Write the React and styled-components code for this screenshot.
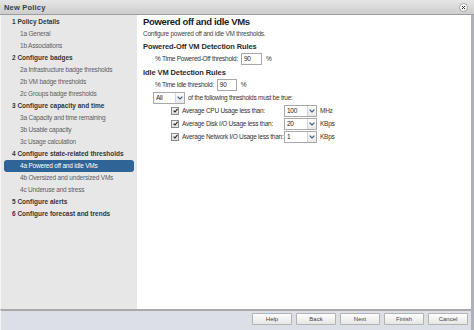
import React from 'react';
import styled, { createGlobalStyle } from 'styled-components';

const GlobalStyle = createGlobalStyle`
  html, body {
    margin: 0;
    padding: 0;
  }
  body {
    font-family: 'Liberation Sans', Arial, sans-serif;
    background: #fff;
  }
`;

const steps = [
  { label: '1 Policy Details', level: 0 },
  { label: '1a General', level: 1 },
  { label: '1b Associations', level: 1 },
  { label: '2 Configure badges', level: 0 },
  { label: '2a Infrastructure badge thresholds', level: 1 },
  { label: '2b VM badge thresholds', level: 1 },
  { label: '2c Groups badge thresholds', level: 1 },
  { label: '3 Configure capacity and time', level: 0 },
  { label: '3a Capacity and time remaining', level: 1 },
  { label: '3b Usable capacity', level: 1 },
  { label: '3c Usage calculation', level: 1 },
  { label: '4 Configure state-related thresholds', level: 0 },
  { label: '4a Powered off and idle VMs', level: 1, active: true },
  { label: '4b Oversized and undersized VMs', level: 1 },
  { label: '4c Underuse and stress', level: 1 },
  { label: '5 Configure alerts', level: 0 },
  { label: '6 Configure forecast and trends', level: 0 },
];

const rules = [
  { label: 'Average CPU Usage less than:', value: '100', unit: 'MHz' },
  { label: 'Average Disk I/O Usage less than:', value: '20', unit: 'KBps' },
  { label: 'Average Network I/O Usage less than:', value: '1', unit: 'KBps' },
];

const buttons = ['Help', 'Back', 'Next', 'Finish', 'Cancel'];

const ChevronDown = () => (
  <svg width="6" height="4" viewBox="0 0 6 4">
    <path d="M0.6 0.6 L3 3 L5.4 0.6" fill="none" stroke="#3d5f86" strokeWidth="1.2" />
  </svg>
);

const CloseIcon = () => (
  <svg width="9" height="9" viewBox="0 0 9 9">
    <circle cx="4.5" cy="4.5" r="4" fill="#f4f4f4" stroke="#9a9a9a" strokeWidth="0.8" />
    <path d="M3 3 L6 6 M6 3 L3 6" stroke="#333" strokeWidth="1" />
  </svg>
);

const CheckMark = () => (
  <svg width="5" height="5" viewBox="0 0 5 5">
    <path d="M0.6 2.6 L2 4 L4.5 0.8" fill="none" stroke="#222" strokeWidth="1.1" />
  </svg>
);

const App = () => {
  return (
    <>
      <GlobalStyle />
      <Window>
        <TitleBar>
          <span>New Policy</span>
          <CloseIcon />
        </TitleBar>
        <Main>
          <Body>
            <Sidebar>
              {steps.map(step => (
                <Step key={step.label} level={step.level} active={step.active}>
                  {step.label}
                </Step>
              ))}
            </Sidebar>
            <Content>
              <Heading>Powered off and idle VMs</Heading>
              <Subtitle>Configure powered off and idle VM thresholds.</Subtitle>
              <SectionTitle>Powered-Off VM Detection Rules</SectionTitle>
              <FieldRow indent={12}>
                <span>% Time Powered-Off threshold:</span>
                <TextBox width={21}>90</TextBox>
                <span>%</span>
              </FieldRow>
              <SectionTitle>Idle VM Detection Rules</SectionTitle>
              <FieldRow indent={12}>
                <span>% Time Idle threshold:</span>
                <TextBox width={20}>90</TextBox>
                <span>%</span>
              </FieldRow>
              <FieldRow indent={10}>
                <Combo>
                  <ComboValue width={19}>All</ComboValue>
                  <ComboArrow>
                    <ChevronDown />
                  </ComboArrow>
                </Combo>
                <span>of the following thresholds must be true:</span>
              </FieldRow>
              {rules.map(rule => (
                <FieldRow key={rule.label} indent={28}>
                  <CheckBox>
                    <CheckMark />
                  </CheckBox>
                  <RuleLabel>{rule.label}</RuleLabel>
                  <Combo>
                    <ComboValue width={20}>{rule.value}</ComboValue>
                    <ComboArrow>
                      <ChevronDown />
                    </ComboArrow>
                  </Combo>
                  <span>{rule.unit}</span>
                </FieldRow>
              ))}
            </Content>
          </Body>
          <Footer>
            {buttons.map(label => (
              <Button key={label}>{label}</Button>
            ))}
          </Footer>
        </Main>
      </Window>
    </>
  );
};

const Window = styled.div`
  width: 474px;
  height: 330px;
  display: flex;
  flex-direction: column;
  overflow: hidden;
  background: #fff;
`;

const TitleBar = styled.div`
  height: 14px;
  flex: none;
  display: flex;
  align-items: center;
  justify-content: space-between;
  padding: 0 6px 0 4px;
  background: linear-gradient(#e6e6e6, #cdcdcd);
  border-bottom: 1px solid #9d9d9d;
  font-size: 7.5px;
  font-weight: bold;
  letter-spacing: 0.2px;
  color: #34404e;
`;

const Main = styled.div`
  flex: 1;
  display: flex;
  flex-direction: column;
  min-height: 0;
  border-right: 3px solid #aeb2b8;
`;

const Body = styled.div`
  flex: 1;
  display: flex;
  min-height: 0;
`;

const Sidebar = styled.div`
  width: 136px;
  flex: none;
  padding-top: 1px;
  background: #e7e7e7;
  border-left: 1px solid #f6f6f6;
`;

const Step = styled.div`
  height: 12px;
  line-height: 12px;
  font-size: 6.5px;
  white-space: nowrap;
  font-weight: ${p => (p.level === 0 ? 'bold' : 'normal')};
  letter-spacing: ${p => (p.level === 0 ? '0' : '-0.2px')};
  color: ${p => (p.active ? '#fff' : p.level === 0 ? '#363636' : '#5e5e5e')};
  padding-left: ${p => (p.level === 0 ? 11 : p.active ? 16 : 19)}px;
  margin: 0 ${p => (p.active ? '3px' : '0')};
  border-radius: ${p => (p.active ? '3px' : '0')};
  background: ${p => (p.active ? '#2f6496' : 'transparent')};
`;

const Content = styled.div`
  flex: 1;
  padding: 1px 0 0 6px;
  color: #333;
  font-size: 6.5px;
  letter-spacing: -0.25px;
`;

const Heading = styled.div`
  height: 12px;
  line-height: 12px;
  font-size: 9.5px;
  font-weight: bold;
  letter-spacing: -0.35px;
  color: #1b1b1b;
`;

const Subtitle = styled.div`
  height: 10px;
  line-height: 10px;
  margin-top: 1px;
  color: #444;
`;

const SectionTitle = styled.div`
  height: 11px;
  line-height: 11px;
  margin-top: 2px;
  font-size: 7.5px;
  font-weight: bold;
  letter-spacing: -0.1px;
  color: #2a2a2a;
`;

const FieldRow = styled.div`
  height: 13px;
  display: flex;
  align-items: center;
  gap: 3px;
  padding-left: ${p => p.indent}px;
  white-space: nowrap;
`;

const TextBox = styled.div`
  width: ${p => p.width}px;
  height: 12px;
  box-sizing: border-box;
  line-height: 10px;
  padding-left: 2px;
  border: 1px solid #a8a8a8;
  background: #fff;
  color: #222;
  margin-right: 1px;
`;

const Combo = styled.div`
  height: 12px;
  display: flex;
  box-sizing: border-box;
  border: 1px solid #a8a8a8;
  background: #fff;
`;

const ComboValue = styled.div`
  width: ${p => p.width}px;
  line-height: 10px;
  padding-left: 2px;
  color: #222;
`;

const ComboArrow = styled.div`
  width: 8px;
  display: flex;
  align-items: center;
  justify-content: center;
  border-left: 1px solid #d4d4d4;
  background: linear-gradient(#fbfbfb, #e8e8e8);
`;

const CheckBox = styled.div`
  width: 6px;
  height: 6px;
  display: flex;
  align-items: center;
  justify-content: center;
  border: 1px solid #8c8c8c;
  background: linear-gradient(#f2f2f2, #dcdcdc);
`;

const RuleLabel = styled.span`
  width: 99px;
`;

const Footer = styled.div`
  height: 21px;
  flex: none;
  display: flex;
  justify-content: flex-end;
  align-items: flex-start;
  gap: 4px;
  padding: 2px 3px 0 0;
  box-sizing: border-box;
  background: #dcdfe6;
  border-top: 2px solid #a9a9a9;
  border-left: 1px solid #f2f3f6;
`;

const Button = styled.div`
  width: 40px;
  height: 12px;
  box-sizing: border-box;
  line-height: 10px;
  text-align: center;
  font-size: 6px;
  color: #444;
  border: 1px solid #b3b3b3;
  border-radius: 1px;
  background: linear-gradient(#fefefe, #e6e6e6);
`;

export default App;
